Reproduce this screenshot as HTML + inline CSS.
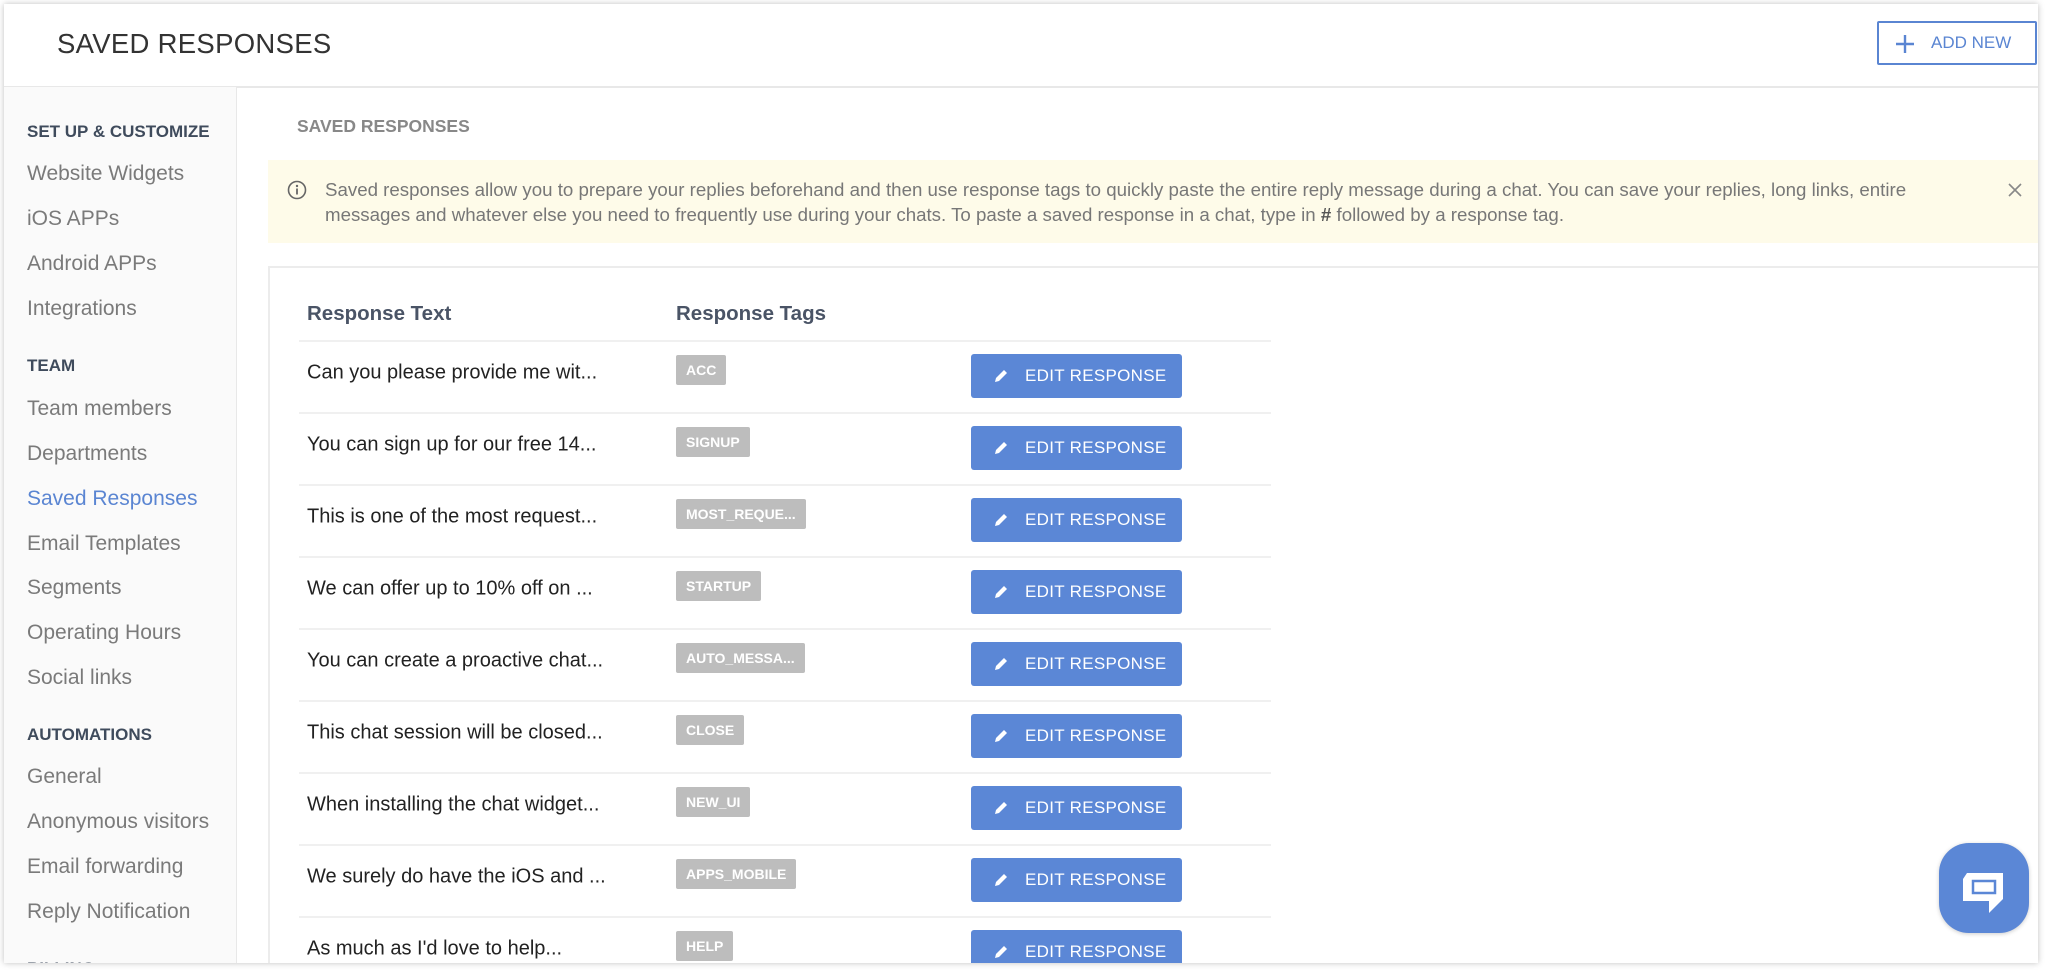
<!DOCTYPE html>
<html><head><meta charset="utf-8"><style>
*{margin:0;padding:0;box-sizing:border-box}
body{width:2048px;height:972px;background:#fff;font-family:"Liberation Sans",sans-serif;position:relative;overflow:hidden}
.frame{position:absolute;left:4px;top:4px;width:2034px;height:959px;background:#fff;box-shadow:0 0 6px rgba(0,0,0,.25);overflow:hidden}
.a{position:absolute;white-space:nowrap}
.side{position:absolute;left:0;top:83px;width:233px;height:900px;background:#fafafa;border-right:1px solid #e8e8e8}
.si{position:absolute;left:23px;font-size:21px;color:#7a7a7a;transform:translateY(-50%)}
.sh{position:absolute;left:23px;font-size:17px;font-weight:bold;color:#3f4b5c;transform:translateY(-50%)}
.row-line{position:absolute;left:295px;width:972px;height:2px;background:#f0f0f0}
.rt{position:absolute;left:303px;font-size:20px;color:#222;transform:translateY(-50%)}
.tag{position:absolute;left:672px;height:30px;background:#bdbdbd;color:#fff;font-weight:bold;font-size:14px;line-height:30px;padding:0 10px;border-radius:2px}
.btn{position:absolute;left:967px;width:211px;height:44px;background:#5b87d6;border-radius:3px;color:#fff;font-size:17px;line-height:44px}
.btn svg{position:absolute;left:22px;top:14px}
.btn span{position:absolute;left:54px;letter-spacing:.3px}
</style></head><body>
<div class="frame">
  <div class="a" style="left:53px;top:24px;font-size:27.5px;color:#333;letter-spacing:.3px">SAVED RESPONSES</div>
  <div class="a" style="left:1873px;top:17px;width:160px;height:44px;border:2px solid #5a85d2;border-radius:2px;color:#5a85d2;font-size:17px;line-height:40px">
    <svg style="position:absolute;left:16px;top:11px" width="20" height="20" viewBox="0 0 20 20"><path d="M10 1v18M1 10h18" stroke="#5a85d2" stroke-width="2.4"/></svg>
    <span style="position:absolute;left:52px">ADD NEW</span>
  </div>
  <div class="a" style="left:0;top:82px;width:2034px;height:2px;background:#e8e8e8"></div>
  <div class="side">
    <div class="sh" style="top:45px">SET UP &amp; CUSTOMIZE</div>
    <div class="si" style="top:87px">Website Widgets</div>
    <div class="si" style="top:132px">iOS APPs</div>
    <div class="si" style="top:177px">Android APPs</div>
    <div class="si" style="top:222px">Integrations</div>
    <div class="sh" style="top:279px">TEAM</div>
    <div class="si" style="top:322px">Team members</div>
    <div class="si" style="top:367px">Departments</div>
    <div class="si" style="top:412px;color:#5a85d2">Saved Responses</div>
    <div class="si" style="top:457px">Email Templates</div>
    <div class="si" style="top:501px">Segments</div>
    <div class="si" style="top:546px">Operating Hours</div>
    <div class="si" style="top:591px">Social links</div>
    <div class="sh" style="top:648px">AUTOMATIONS</div>
    <div class="si" style="top:690px">General</div>
    <div class="si" style="top:735px">Anonymous visitors</div>
    <div class="si" style="top:780px">Email forwarding</div>
    <div class="si" style="top:825px">Reply Notification</div>
    <div class="sh" style="top:882px">BILLING</div>
  </div>
  <div class="a" style="left:293px;top:112px;font-size:17.5px;font-weight:bold;color:#888">SAVED RESPONSES</div>
  <div class="a" style="left:264px;top:156px;width:1770px;height:83px;background:#fefbe9"></div>
  <svg class="a" style="left:283px;top:176px" width="20" height="20" viewBox="0 0 20 20"><circle cx="10" cy="10" r="8.5" fill="none" stroke="#666" stroke-width="1.6"/><circle cx="10" cy="6" r="1.2" fill="#666"/><path d="M10 8.5v6" stroke="#666" stroke-width="1.8"/></svg>
  <div class="a" style="left:321px;top:173px;font-size:18.7px;line-height:25px;color:#777">Saved responses allow you to prepare your replies beforehand and then use response tags to quickly paste the entire reply message during a chat. You can save your replies, long links, entire<br>messages and whatever else you need to frequently use during your chats. To paste a saved response in a chat, type in <b style="color:#555">#</b> followed by a response tag.</div>
  <svg class="a" style="left:2003px;top:178px" width="16" height="16" viewBox="0 0 16 16"><path d="M2 2l12 12M14 2L2 14" stroke="#888" stroke-width="1.6"/></svg>
  <div class="a" style="left:264px;top:262px;width:1780px;height:720px;background:#fff;border-top:2px solid #ececec;border-left:2px solid #ececec"></div>
  <div class="a" style="left:303px;top:298px;font-size:20.5px;font-weight:bold;color:#4a5466">Response Text</div>
  <div class="a" style="left:672px;top:298px;font-size:20.5px;font-weight:bold;color:#4a5466">Response Tags</div>

  <div class="row-line" style="top:336px"></div>
  <div class="rt" style="top:369px">Can you please provide me wit...</div><div class="tag" style="top:351px">ACC</div>
  <div class="btn" style="top:350px"><svg width="16" height="16" viewBox="0 0 16 16"><path d="M2 14l1-4 8-8 3 3-8 8z" fill="#fff"/></svg><span>EDIT RESPONSE</span></div>

  <div class="row-line" style="top:408px"></div>
  <div class="rt" style="top:441px">You can sign up for our free 14...</div><div class="tag" style="top:423px">SIGNUP</div>
  <div class="btn" style="top:422px"><svg width="16" height="16" viewBox="0 0 16 16"><path d="M2 14l1-4 8-8 3 3-8 8z" fill="#fff"/></svg><span>EDIT RESPONSE</span></div>

  <div class="row-line" style="top:480px"></div>
  <div class="rt" style="top:513px">This is one of the most request...</div><div class="tag" style="top:495px">MOST_REQUE...</div>
  <div class="btn" style="top:494px"><svg width="16" height="16" viewBox="0 0 16 16"><path d="M2 14l1-4 8-8 3 3-8 8z" fill="#fff"/></svg><span>EDIT RESPONSE</span></div>

  <div class="row-line" style="top:552px"></div>
  <div class="rt" style="top:585px">We can offer up to 10% off on ...</div><div class="tag" style="top:567px">STARTUP</div>
  <div class="btn" style="top:566px"><svg width="16" height="16" viewBox="0 0 16 16"><path d="M2 14l1-4 8-8 3 3-8 8z" fill="#fff"/></svg><span>EDIT RESPONSE</span></div>

  <div class="row-line" style="top:624px"></div>
  <div class="rt" style="top:657px">You can create a proactive chat...</div><div class="tag" style="top:639px">AUTO_MESSA...</div>
  <div class="btn" style="top:638px"><svg width="16" height="16" viewBox="0 0 16 16"><path d="M2 14l1-4 8-8 3 3-8 8z" fill="#fff"/></svg><span>EDIT RESPONSE</span></div>

  <div class="row-line" style="top:696px"></div>
  <div class="rt" style="top:729px">This chat session will be closed...</div><div class="tag" style="top:711px">CLOSE</div>
  <div class="btn" style="top:710px"><svg width="16" height="16" viewBox="0 0 16 16"><path d="M2 14l1-4 8-8 3 3-8 8z" fill="#fff"/></svg><span>EDIT RESPONSE</span></div>

  <div class="row-line" style="top:768px"></div>
  <div class="rt" style="top:801px">When installing the chat widget...</div><div class="tag" style="top:783px">NEW_UI</div>
  <div class="btn" style="top:782px"><svg width="16" height="16" viewBox="0 0 16 16"><path d="M2 14l1-4 8-8 3 3-8 8z" fill="#fff"/></svg><span>EDIT RESPONSE</span></div>

  <div class="row-line" style="top:840px"></div>
  <div class="rt" style="top:873px">We surely do have the iOS and ...</div><div class="tag" style="top:855px">APPS_MOBILE</div>
  <div class="btn" style="top:854px"><svg width="16" height="16" viewBox="0 0 16 16"><path d="M2 14l1-4 8-8 3 3-8 8z" fill="#fff"/></svg><span>EDIT RESPONSE</span></div>

  <div class="row-line" style="top:912px"></div>
  <div class="rt" style="top:945px">As much as I'd love to help...</div><div class="tag" style="top:927px">HELP</div>
  <div class="btn" style="top:926px"><svg width="16" height="16" viewBox="0 0 16 16"><path d="M2 14l1-4 8-8 3 3-8 8z" fill="#fff"/></svg><span>EDIT RESPONSE</span></div>

  <div class="a" style="left:1935px;top:839px;width:90px;height:90px;border-radius:30px;background:#5b87d6;box-shadow:0 1px 4px rgba(0,0,0,.2)">
    <svg style="position:absolute;left:22px;top:28px" width="46" height="44" viewBox="0 0 46 44"><path d="M6 2h36v26L28 42V30H2V8z" fill="#fff"/><rect x="12" y="10" width="22" height="12" fill="none" stroke="#5b87d6" stroke-width="2.5"/></svg>
  </div>
</div>
</body></html>
